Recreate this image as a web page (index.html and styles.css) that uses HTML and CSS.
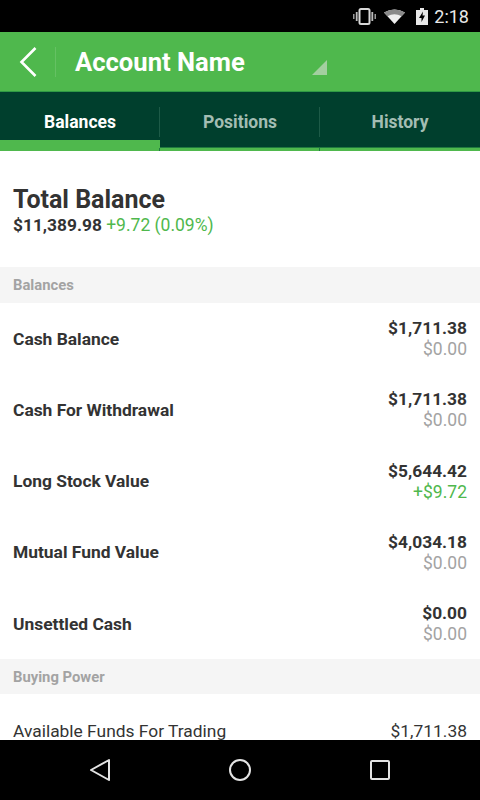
FILE: index.html
```html
<!DOCTYPE html>
<html lang="en">
<head>
<meta charset="utf-8">
<title>Account</title>
<link rel="stylesheet" href="styles.css">
</head>
<body>
<div class="phone">
  <div class="statusbar">
    <svg class="st-vib" width="23" height="17" viewBox="0 0 23 17"><rect x="6.5" y="1" width="10" height="15" rx="1.5" fill="none" stroke="#d8d8d8" stroke-width="2"/><rect x="2.8" y="4" width="1.8" height="9" fill="#bbb"/><rect x="18.4" y="4" width="1.8" height="9" fill="#bbb"/><rect x="0" y="6" width="1.5" height="5" fill="#999"/><rect x="21.5" y="6" width="1.5" height="5" fill="#999"/></svg>
    <svg class="st-wifi" width="21" height="15" viewBox="0 0 21 15"><path d="M0 3.6Q10.5-2.6 21 3.6L10.5 15Z" fill="#efefef"/><path d="M0 3.6Q10.5-2.6 21 3.6L17.6 7.3Q10.5 3.2 3.4 7.3Z" fill="#8a8a8a"/></svg>
    <svg class="st-batt" width="12" height="17" viewBox="0 0 12 17"><path d="M4 0h4v2h4v15H0V2h4Z" fill="#e8e8e8"/><path d="M7 3.5 3 10h2.5v4l3.5-6.5H6.5Z" fill="#000"/></svg>
    <span class="clock">2:18</span>
  </div>
  <header class="appbar">
    <button class="back" aria-label="Back"><svg width="18" height="30" viewBox="0 0 18 30"><path d="M16.5 1 2.5 15l14 14" fill="none" stroke="#fff" stroke-width="2.6"/></svg></button>
    <div class="title-wrap">
      <h1 class="title">Account Name</h1>
      <svg class="caret" width="15" height="15" viewBox="0 0 15 15"><path d="M0 15 15 0v15Z" fill="#a3cfa0"/></svg>
    </div>
  </header>
  <nav class="tabs">
    <div class="tab active">Balances</div>
    <div class="tab">Positions</div>
    <div class="tab">History</div>
  </nav>
  <main class="content">
    <section class="total">
      <h2>Total Balance</h2>
      <p><b>$11,389.98</b> <span class="up">+9.72 (0.09%)</span></p>
    </section>
    <div class="section-head">Balances</div>
    <div class="row"><span class="label">Cash Balance</span><div class="vals"><b>$1,711.38</b><span>$0.00</span></div></div>
    <div class="row"><span class="label">Cash For Withdrawal</span><div class="vals"><b>$1,711.38</b><span>$0.00</span></div></div>
    <div class="row"><span class="label">Long Stock Value</span><div class="vals"><b>$5,644.42</b><span class="up">+$9.72</span></div></div>
    <div class="row"><span class="label">Mutual Fund Value</span><div class="vals"><b>$4,034.18</b><span>$0.00</span></div></div>
    <div class="row"><span class="label">Unsettled Cash</span><div class="vals"><b>$0.00</b><span>$0.00</span></div></div>
    <div class="section-head">Buying Power</div>
    <div class="row plain"><span>Available Funds For Trading</span><span>$1,711.38</span></div>
  </main>
  <footer class="navbar">
    <svg width="22" height="24" viewBox="0 0 22 24"><path d="M20 2 2 12l18 10Z" fill="none" stroke="#e4e4e4" stroke-width="2" stroke-linejoin="round"/></svg>
    <svg width="24" height="24" viewBox="0 0 24 24"><circle cx="12" cy="12" r="10" fill="none" stroke="#e4e4e4" stroke-width="2"/></svg>
    <svg width="22" height="22" viewBox="0 0 22 22"><rect x="2" y="2" width="18" height="18" rx="1" fill="none" stroke="#e4e4e4" stroke-width="2"/></svg>
  </footer>
</div>
</body>
</html>
```
FILE: styles.css
```css
* { box-sizing: border-box; margin: 0; padding: 0; }
html, body { width: 480px; height: 800px; overflow: hidden; background: #fff; }
body { font-family: Roboto, "Liberation Sans", sans-serif; color: #333; }
.phone { width: 480px; height: 800px; display: flex; flex-direction: column; }
.statusbar { height: 32px; flex: none; background: #000; display: flex; align-items: center; justify-content: flex-end; padding-right: 11px; color: #e8e8e8; }
.st-vib { margin-right: 8px; }
.st-wifi { margin-right: 11px; }
.st-batt { margin-right: 6px; }
.clock { font-size: 18px; font-weight: 400; }
.appbar { height: 60px; flex: none; background: #4fb84d; border-bottom: 1px solid #2f9a45; display: flex; align-items: center; }
.back { width: 56px; height: 30px; border: 0; background: none; border-right: 1px solid #65c163; display: flex; align-items: center; justify-content: center; }
.title-wrap { display: flex; align-items: center; margin-left: 19px; position: relative; width: 252px; }
.title { font-size: 25.6px; font-weight: 700; color: #fff; }
.caret { position: absolute; right: 0; top: 13px; }
.tabs { height: 59px; flex: none; background: #003f2d; display: flex; }
.tab { flex: 1; display: flex; align-items: center; justify-content: center; font-size: 17.5px; font-weight: 700; color: #a3bdb3; position: relative; padding-top: 3px; border-bottom: 3px solid #4fb84d; box-shadow: inset 0 -1px 0 #1f7a3f; }
.tab + .tab::before { content: ""; position: absolute; left: -1px; top: 15px; height: 30px; width: 1px; background: #1d5a47; }
.tab + .tab::after { content: ""; position: absolute; left: -1px; bottom: -3px; height: 3px; width: 1px; background: #1f7a3f; }
.tab.active { color: #fff; border-bottom: 11px solid #4fb84d; padding-top: 11px; box-shadow: none; }
.content { flex: 1; overflow: hidden; background: #fff; }
.total { height: 116px; padding: 34px 13px 0; }
.total h2 { font-size: 25px; font-weight: 700; line-height: 30px; color: #333; }
.total p { font-size: 17.5px; line-height: 21px; }
.total b { font-weight: 700; font-size: 17.33px; }
.up { color: #4fb84d; }
.section-head { height: 35.5px; background: #f5f5f5; padding-left: 13px; display: flex; align-items: center; font-size: 14.8px; font-weight: 700; color: #a3a3a3; }
.row { height: 71.25px; padding: 0 13px; display: flex; align-items: center; justify-content: space-between; }
.label { font-size: 17.4px; font-weight: 700; color: #333; padding-top: 1px; }
.vals { display: flex; flex-direction: column; align-items: flex-end; font-size: 17.5px; line-height: 21px; padding-top: 2px; }
.vals b { font-weight: 700; font-size: 17.33px; }
.vals span { color: #a3a3a3; }
.vals span.up { color: #4fb84d; }
.row.plain { font-size: 17.4px; color: #333; align-items: flex-start; padding-top: 27px; }
.navbar { height: 60px; flex: none; background: #000; display: flex; align-items: center; padding-left: 89px; padding-right: 89px; justify-content: space-between; }
```
